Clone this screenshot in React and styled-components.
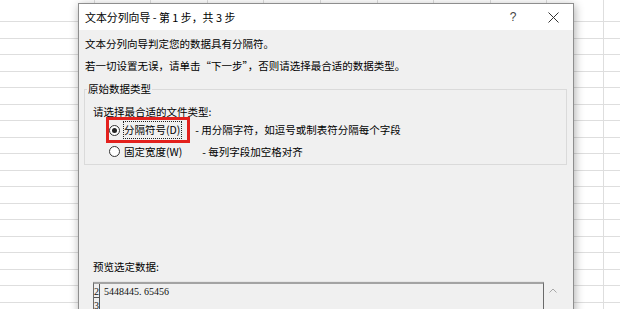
import React from "react";
import styled, { createGlobalStyle } from "styled-components";

const Global = createGlobalStyle`
  html, body { margin: 0; padding: 0; }
  body {
    width: 620px;
    height: 309px;
    overflow: hidden;
    font-family: "Noto Sans CJK SC", "Noto Sans", sans-serif;
    color: #000;
  }
`;

const Page = styled.div`
  box-sizing: border-box;
  width: 620px;
  height: 309px;
  overflow: hidden;
  padding: 3px 0 0 78px;
  background-color: #ffffff;
  background-image:
    repeating-linear-gradient(to bottom, transparent 0 15.5px, #dedede 15.5px 16.5px),
    repeating-linear-gradient(to right, transparent 0 55.6px, #dedede 55.6px 56.6px);
  background-position: 0 6px, 38px 0;
`;

const Dialog = styled.div`
  box-sizing: border-box;
  width: 496px;
  height: 340px;
  border: 1px solid #8e8e8e;
  background: #f0f0f0;
  box-shadow: 1px 2px 9px rgba(0, 0, 0, 0.32);
  display: flex;
  flex-direction: column;
`;

const TitleBar = styled.div`
  height: 26px;
  flex: none;
  background: #ffffff;
  display: flex;
  align-items: center;
  padding-left: 6px;
`;

const Title = styled.div`
  flex: 1;
  font-size: 10.9px;
  line-height: 14px;
  white-space: nowrap;
`;

const TitleButton = styled.div`
  width: 40px;
  height: 26px;
  display: flex;
  align-items: center;
  justify-content: center;
  font-family: "Liberation Sans", sans-serif;
  font-size: 12px;
  color: #444;
`;

const Body = styled.div`
  display: flex;
  flex-direction: column;
  padding: 0 6px;
`;

const Para = styled.div`
  font-size: 10.5px;
  line-height: 14px;
  white-space: nowrap;
  margin-top: ${(p) => p.$top || 0}px;
  padding-left: ${(p) => p.$indent || 0}px;
`;

const Group = styled.div`
  position: relative;
  box-sizing: border-box;
  width: 483px;
  margin: 16px 0 0 -1px;
  border: 1px solid #dadada;
  padding: 15px 0 4px 8px;
`;

const GroupLabel = styled.div`
  position: absolute;
  left: 2px;
  top: -8px;
  padding: 0 1px;
  background: #f0f0f0;
  font-size: 10.5px;
  line-height: 14px;
  white-space: nowrap;
`;

const Options = styled.div`
  display: flex;
  flex-direction: column;
  padding-left: 13px;
  margin-top: -2px;
`;

const OptionRow = styled.div`
  display: flex;
  align-items: center;
  height: ${(p) => (p.$tall ? 26 : 17)}px;
`;

const Highlight = styled.div`
  box-sizing: border-box;
  height: 26px;
  display: flex;
  align-items: center;
  border: 3px solid #e3211d;
  padding-right: 5px;
`;

const Plain = styled.div`
  display: flex;
  align-items: center;
  padding-left: 3px;
`;

const Radio = styled.span`
  box-sizing: border-box;
  width: 11px;
  height: 11px;
  border-radius: 50%;
  border: 1px solid #333;
  background: #fff;
  display: flex;
  align-items: center;
  justify-content: center;
  &::after {
    content: "";
    width: 5px;
    height: 5px;
    border-radius: 50%;
    background: ${(p) => (p.$checked ? "#222" : "transparent")};
  }
`;

const OptionLabel = styled.span`
  margin-left: 3px;
  border: 1px ${(p) => (p.$focused ? "dotted #222" : "solid transparent")};
  padding: 1px 1px 1px 0;
  font-size: 10.5px;
  line-height: 14px;
  white-space: nowrap;
`;

const Description = styled.span`
  margin-left: ${(p) => p.$gap}px;
  font-size: 10.5px;
  line-height: 14px;
  white-space: nowrap;
`;

const PreviewRow = styled.div`
  display: flex;
  margin: 8px 0 0 8px;
`;

const PreviewBox = styled.div`
  box-sizing: border-box;
  width: 451px;
  height: 40px;
  border-top: 2px solid #a3a3a3;
  border-left: 1px solid #6a6a6a;
  border-right: 1px solid #6a6a6a;
  box-shadow: 0 -1px 0 #e6e6e6;
  background: #f0f0f0;
  display: flex;
  flex-direction: column;
`;

const DataRow = styled.div`
  display: flex;
  align-items: stretch;
  height: 14px;
`;

const RowNum = styled.div`
  width: 5px;
  border-right: 1px solid #555;
  border-bottom: 1px solid #555;
  font-family: "Liberation Serif", serif;
  font-size: 10px;
  line-height: 15px;
  text-align: center;
  color: #111;
`;

const DataText = styled.div`
  margin-left: 4px;
  font-family: "Liberation Serif", serif;
  font-size: 10px;
  line-height: 15px;
  white-space: pre;
  color: #111;
`;

const ScrollCol = styled.div`
  width: 18px;
  display: flex;
  justify-content: center;
  padding-top: 6px;
`;

const CloseIcon = () => (
  <svg width="11" height="11" viewBox="0 0 11 11">
    <path d="M0.5 0.5 L10.5 10.5 M10.5 0.5 L0.5 10.5" stroke="#333" strokeWidth="1" fill="none" />
  </svg>
);

const ChevronUp = () => (
  <svg width="8" height="5" viewBox="0 0 8 5">
    <path d="M0.5 4.5 L4 1 L7.5 4.5" stroke="#a8a8a8" strokeWidth="1" fill="none" />
  </svg>
);

export default function App() {
  return (
    <>
      <Global />
      <Page>
        <Dialog>
          <TitleBar>
            <Title>文本分列向导 - 第 1 步，共 3 步</Title>
            <TitleButton>?</TitleButton>
            <TitleButton>
              <CloseIcon />
            </TitleButton>
          </TitleBar>
          <Body>
            <Para $top={7}>文本分列向导判定您的数据具有分隔符。</Para>
            <Para $top={8}>若一切设置无误，请单击“下一步”，否则请选择最合适的数据类型。</Para>
            <Group>
              <GroupLabel>原始数据类型</GroupLabel>
              <Para>请选择最合适的文件类型:</Para>
              <Options>
                <OptionRow $tall>
                  <Highlight>
                    <Radio $checked />
                    <OptionLabel $focused>分隔符号(D)</OptionLabel>
                  </Highlight>
                  <Description $gap={5}>- 用分隔字符，如逗号或制表符分隔每个字段</Description>
                </OptionRow>
                <OptionRow>
                  <Plain>
                    <Radio />
                    <OptionLabel>固定宽度(W)</OptionLabel>
                  </Plain>
                  <Description $gap={18}>- 每列字段加空格对齐</Description>
                </OptionRow>
              </Options>
            </Group>
            <Para $top={95} $indent={8}>预览选定数据:</Para>
            <PreviewRow>
              <PreviewBox>
                <DataRow>
                  <RowNum>2</RowNum>
                  <DataText>5448445. 65456</DataText>
                </DataRow>
                <DataRow>
                  <RowNum>3</RowNum>
                  <DataText></DataText>
                </DataRow>
              </PreviewBox>
              <ScrollCol>
                <ChevronUp />
              </ScrollCol>
            </PreviewRow>
          </Body>
        </Dialog>
      </Page>
    </>
  );
}
